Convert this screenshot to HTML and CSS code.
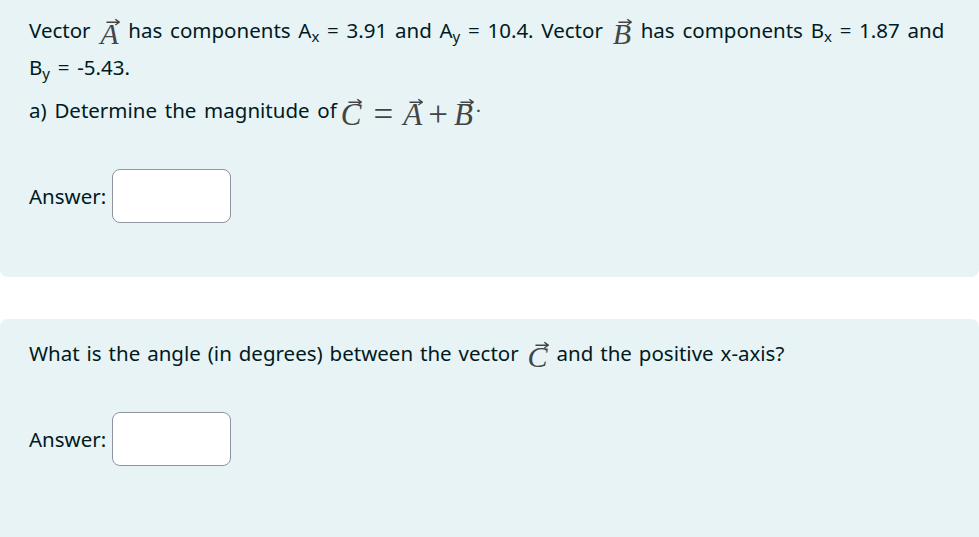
FILE: index.html
```html
<!DOCTYPE html>
<html>
<head>
<meta charset="utf-8">
<link rel="stylesheet" href="styles.css">
</head>
<body>
<div class="page">
  <div class="panel first">
    <p class="qtext">Vector <span class="vec"><i>A</i><svg class="arrow" viewBox="0 0 14 8"><path d="M0.5 4.2H12.5M9.3 1.2L13.3 4.2L9.3 7" fill="none" stroke="currentColor" stroke-width="1.4"/></svg></span> has components A<sub>x</sub> = 3.91 and A<sub>y</sub> = 10.4. Vector <span class="vec"><i>B</i><svg class="arrow" viewBox="0 0 14 8"><path d="M0.5 4.2H12.5M9.3 1.2L13.3 4.2L9.3 7" fill="none" stroke="currentColor" stroke-width="1.4"/></svg></span> has components B<sub>x</sub> = 1.87 and B<sub>y</sub> = -5.43.</p>
    <p class="qtext">a) Determine the magnitude of<span class="math"><span class="vec"><i>C</i><svg class="arrow" viewBox="0 0 14 8"><path d="M0.5 4.2H12.5M9.3 1.2L13.3 4.2L9.3 7" fill="none" stroke="currentColor" stroke-width="1.4"/></svg></span><span class="op eq">=</span><span class="vec"><i>A</i><svg class="arrow" viewBox="0 0 14 8"><path d="M0.5 4.2H12.5M9.3 1.2L13.3 4.2L9.3 7" fill="none" stroke="currentColor" stroke-width="1.4"/></svg></span><span class="op plus">+</span><span class="vec"><i>B</i><svg class="arrow" viewBox="0 0 14 8"><path d="M0.5 4.2H12.5M9.3 1.2L13.3 4.2L9.3 7" fill="none" stroke="currentColor" stroke-width="1.4"/></svg></span><span class="dot">·</span></span></p>
    <div class="answer"><label>Answer:</label><input type="text" class="box"></div>
  </div>
  <div class="panel second">
    <p class="qtext q2">What is the angle (in degrees) between the vector <span class="vec"><i>C</i><svg class="arrow" viewBox="0 0 14 8"><path d="M0.5 4.2H12.5M9.3 1.2L13.3 4.2L9.3 7" fill="none" stroke="currentColor" stroke-width="1.4"/></svg></span> and the positive x-axis?</p>
    <div class="answer"><label>Answer:</label><input type="text" class="box"></div>
  </div>
</div>
</body>
</html>
```
FILE: styles.css
```css
html, body {
  margin: 0;
  padding: 0;
  background: #ffffff;
}
body {
  font-family: "Noto Sans", "Open Sans", sans-serif;
  font-size: 20.5px;
  color: #001a1e;
}
.page {
  display: flex;
  flex-direction: column;
  gap: 42px;
  width: 979px;
}
.panel {
  background: #e7f3f5;
  border-radius: 8px;
  padding: 0 29px;
}
.first {
  height: 277px;
  border-top-left-radius: 0;
  border-top-right-radius: 0;
  padding-top: 12px;
  box-sizing: border-box;
}
.second {
  height: 230px;
  padding-top: 16px;
  box-sizing: border-box;
}
.qtext {
  margin: 0 0 7px 0;
  line-height: 36px;
  word-spacing: 2.4px;
}
.q2 {
  word-spacing: 1.6px;
}
sub {
  font-size: 15px;
  vertical-align: -4px;
  line-height: 0;
  word-spacing: 0;
}
.vec {
  position: relative;
  display: inline-block;
  font-family: "Liberation Serif", serif;
  color: #444444;
  font-size: 30px;
  line-height: 1;
  vertical-align: -6px;
  margin: 0 2px;
}
.vec i {
  font-style: italic;
}
.arrow {
  position: absolute;
  right: -1px;
  top: -1px;
  width: 14px;
  height: 8px;
}
.math {
  font-family: "Liberation Serif", serif;
  color: #444444;
  font-size: 31px;
  line-height: 1;
  word-spacing: 0;
  margin-left: 4px;
}
.math .vec {
  margin: 0;
  font-size: 31px;
  vertical-align: -7px;
}
.op {
  display: inline-block;
  font-size: 35px;
  vertical-align: -8px;
}
.eq {
  margin: 0 10px 0 12px;
}
.plus {
  margin: 0 6px 0 6px;
}
.dot {
  display: inline-block;
  font-size: 22px;
  margin-left: 2px;
}
.answer {
  display: flex;
  align-items: center;
  gap: 6px;
  margin-top: 37px;
}
.second .answer {
  margin-top: 40px;
}
.box {
  width: 119px;
  height: 54px;
  box-sizing: border-box;
  border: 1px solid #8f959e;
  border-radius: 8px;
  background: #fff;
  margin: 0;
}
```
